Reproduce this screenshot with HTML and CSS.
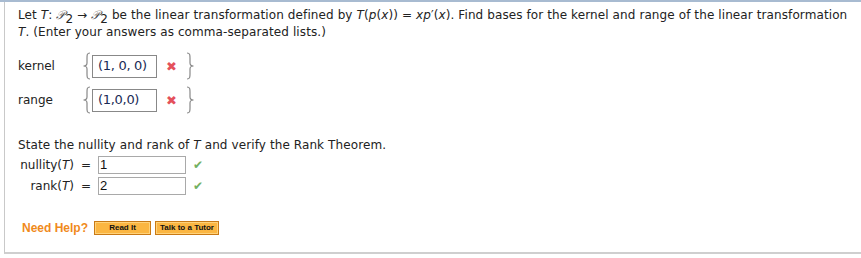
FILE: index.html
```html
<!DOCTYPE html>
<html>
<head>
<meta charset="utf-8">
<link rel="stylesheet" href="styles.css">
</head>
<body>
<div class="topbar"></div>
<div class="panel">
  <p class="q">Let <i>T</i>: <span class="scr">𝒫</span><sub>2</sub> → <span class="scr">𝒫</span><sub>2</sub> be the linear transformation defined by <i>T</i>(<i>p</i>(<i>x</i>)) = <i>xp</i>′(<i>x</i>). Find bases for the kernel and range of the linear transformation<br><i>T</i>. (Enter your answers as comma-separated lists.)</p>

  <div class="setrow r1">
    <span class="lbl">kernel</span>
    <svg class="brace" width="10" height="28" viewBox="0 0 10 28"><path d="M8 1 C5 1 5 3 5 6 L5 11 C5 13 4 14 1.5 14 C4 14 5 15 5 17 L5 22 C5 25 5 27 8 27" fill="none" stroke="#888" stroke-width="1.2"/></svg>
    <span class="mbox">(1, 0, 0)</span>
    <span class="cross">✖</span>
    <svg class="brace" width="10" height="28" viewBox="0 0 10 28"><path d="M2 1 C5 1 5 3 5 6 L5 11 C5 13 6 14 8.5 14 C6 14 5 15 5 17 L5 22 C5 25 5 27 2 27" fill="none" stroke="#888" stroke-width="1.2"/></svg>
  </div>
  <div class="setrow r2">
    <span class="lbl">range</span>
    <svg class="brace" width="10" height="28" viewBox="0 0 10 28"><path d="M8 1 C5 1 5 3 5 6 L5 11 C5 13 4 14 1.5 14 C4 14 5 15 5 17 L5 22 C5 25 5 27 8 27" fill="none" stroke="#888" stroke-width="1.2"/></svg>
    <span class="mbox">(1,0,0)</span>
    <span class="cross">✖</span>
    <svg class="brace" width="10" height="28" viewBox="0 0 10 28"><path d="M2 1 C5 1 5 3 5 6 L5 11 C5 13 6 14 8.5 14 C6 14 5 15 5 17 L5 22 C5 25 5 27 2 27" fill="none" stroke="#888" stroke-width="1.2"/></svg>
  </div>

  <p class="q2">State the nullity and rank of <i>T</i> and verify the Rank Theorem.</p>
  <div class="eqrow">
    <span class="elbl">nullity(<i>T</i>)</span><span class="eq">=</span><span class="tbox">1</span><span class="check">✔</span>
  </div>
  <div class="eqrow">
    <span class="elbl">rank(<i>T</i>)</span><span class="eq">=</span><span class="tbox">2</span><span class="check">✔</span>
  </div>

  <div class="help">
    <span class="need">Need Help?</span>
    <span class="btn b1">Read It</span>
    <span class="btn b2">Talk to a Tutor</span>
  </div>
</div>
</body>
</html>
```

FILE: styles.css
```css
html, body { margin: 0; padding: 0; background: #fff; }
body { font-family: "DejaVu Sans", Verdana, sans-serif; font-size: 12px; color: #222; }
.topbar { height: 2px; background: #a8bbd1; }
.panel {
  margin-left: 4px;
  border-left: 1px solid #c9c9c9;
  border-bottom: 2px solid #cfcfcf;
  height: 252px;
  box-sizing: border-box;
  padding-left: 13px;
  padding-top: 5px;
}
.q { margin: 0; line-height: 17px; letter-spacing: 0.1px; }
.scr { font-family: "DejaVu Serif", serif; font-style: italic; color: #444; }
sub { font-size: 12px; vertical-align: -4px; line-height: 0; }
.setrow { display: flex; align-items: center; height: 30px; }
.r1 { margin-top: 10px; }
.r2 { margin-top: 4px; }
.lbl { width: 64px; }
.brace { display: block; }
.mbox {
  width: 58px; height: 21px;
  border: 1px solid #888;
  padding-left: 5px;
  font-size: 13px;
  letter-spacing: -0.3px;
  line-height: 19px;
  color: #1a2a55;
  box-sizing: content-box;
}
.cross { color: #e4515b; font-size: 13px; margin-left: 9px; width: 19px; }
.q2 { margin: 22px 0 0 0; line-height: 17px; letter-spacing: 0.1px; }
.eqrow { display: flex; align-items: center; height: 21px; }
.eqrow:first-of-type { margin-top: 1px; }
.elbl { width: 56px; text-align: right; white-space: nowrap; }
.eq { width: 24px; text-align: center; }
.tbox {
  width: 85px; height: 16px;
  border: 1px solid #a9a9a9;
  line-height: 16px;
  padding-left: 1px;
  color: #111;
  font-family: "Liberation Sans", Arial, sans-serif;
  font-size: 13px;
}
.check { color: #72b062; font-size: 12px; margin-left: 7px; }
.help { display: flex; align-items: center; margin-top: 25px; padding-left: 4px; }
.need { font-family: "Liberation Sans", Arial, sans-serif; font-weight: bold; font-size: 12px; color: #f08a1c; margin-right: 6px; }
.btn {
  font-family: "Liberation Sans", Arial, sans-serif;
  font-weight: bold; font-size: 8px; color: #111;
  background: #fbb642;
  border: 1px solid #c97a15;
  box-shadow: inset 0 0 0 1px #ffd27a;
  height: 12px; line-height: 12px;
  text-align: center;
}
.b1 { width: 55px; }
.b2 { width: 62px; margin-left: 4px; }
```
